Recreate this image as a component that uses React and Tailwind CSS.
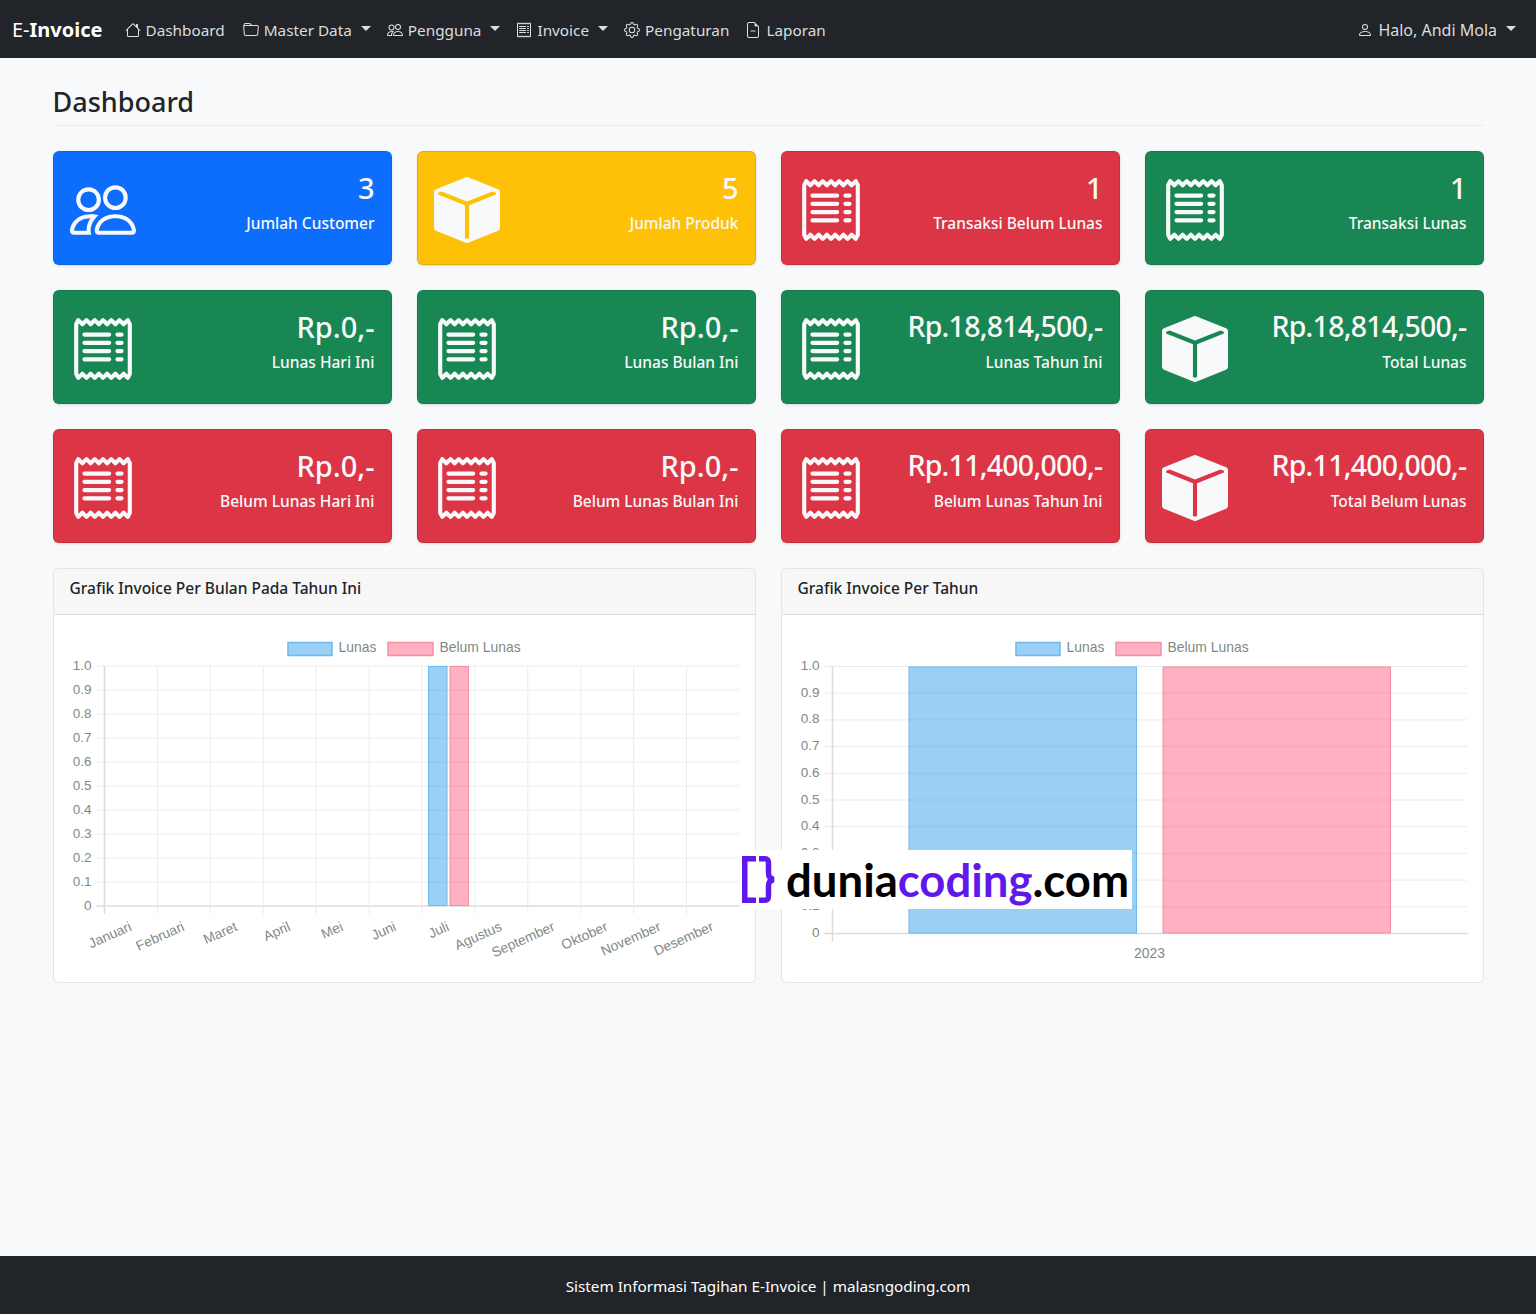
import React from "react";
import { BsHouse, BsFolder, BsPeople, BsReceipt, BsGear, BsFileEarmarkMinus, BsPerson, BsBoxFill } from "react-icons/bs";

const font = { fontFamily: "'Liberation Sans', Arial, sans-serif" };

function NavItem({ icon: Icon, label, caret, size = "text-[15.3px]", extra = "" }) {
  return (
    <a className={`flex items-center gap-[5px] px-2 text-[#ffffffd9] ${size} ${extra}`}>
      <Icon className="text-[16px]" />
      <span>{label}</span>
      {caret && <span className="mb-[3px] ml-[4px] h-0 w-0 border-x-[5px] border-t-[5px] border-x-transparent border-t-[#ffffffd9]" />}
    </a>
  );
}

function StatCard({ color, icon: Icon, value, label }) {
  const valueSize = value.length > 8 ? "text-[28.5px] tracking-[-0.75px]" : "text-[29px]";
  return (
    <div className={`flex h-[114px] items-center justify-between rounded-[6px] border border-black/10 px-4 text-[#f8f9fa] shadow-sm ${color}`}>
      <Icon className="mt-[4px] text-[66px]" />
      <div className="pb-[12px] text-right">
        <div className={`h-[33px] font-medium leading-[33px] ${valueSize}`}>{value}</div>
        <div className="mt-[8px] text-[15.5px] font-medium leading-[22px]">{label}</div>
      </div>
    </div>
  );
}

const G = "bg-[#198754]";
const R = "bg-[#dc3545]";
const cards = [
  ["bg-[#0d6efd]", BsPeople, "3", "Jumlah Customer"],
  ["bg-[#ffc107]", BsBoxFill, "5", "Jumlah Produk"],
  [R, BsReceipt, "1", "Transaksi Belum Lunas"],
  [G, BsReceipt, "1", "Transaksi Lunas"],
  [G, BsReceipt, "Rp.0,-", "Lunas Hari Ini"],
  [G, BsReceipt, "Rp.0,-", "Lunas Bulan Ini"],
  [G, BsReceipt, "Rp.18,814,500,-", "Lunas Tahun Ini"],
  [G, BsBoxFill, "Rp.18,814,500,-", "Total Lunas"],
  [R, BsReceipt, "Rp.0,-", "Belum Lunas Hari Ini"],
  [R, BsReceipt, "Rp.0,-", "Belum Lunas Bulan Ini"],
  [R, BsReceipt, "Rp.11,400,000,-", "Belum Lunas Tahun Ini"],
  [R, BsBoxFill, "Rp.11,400,000,-", "Total Belum Lunas"],
];

const GRID = "#ebebeb";
const AXIS = "#dcdcdc";
const TXT = "#7f8a86";
const BLUE = "rgba(54,162,235,0.5)";
const BLUEB = "#6fb8ee";
const PINK = "rgba(255,99,132,0.5)";
const PINKB = "#f58ea4";

function Legend({ x }) {
  return (
    <g style={font} fontSize="13.9" fill={TXT}>
      <rect x={x} y={642.5} width={44} height={13} fill={BLUE} stroke={BLUEB} strokeWidth="1.5" />
      <text x={x + 50.5} y={652}>Lunas</text>
      <rect x={x + 100} y={642.5} width={45} height={13} fill={PINK} stroke={PINKB} strokeWidth="1.5" />
      <text x={x + 151.5} y={652}>Belum Lunas</text>
    </g>
  );
}

const months = ["Januari", "Februari", "Maret", "April", "Mei", "Juni", "Juli", "Agustus", "September", "Oktober", "November", "Desember"];
const rows = [0, 1, 2, 3, 4, 5, 6, 7, 8, 9, 10];

function MonthChart() {
  const x0 = 104, x1 = 739, y0 = 906, y1 = 666;
  const cw = (x1 - x0) / 12;
  return (
    <svg width="701" height="367" className="block">
      <g transform="translate(-53.5,-615)">
        <Legend x={287.5} />
        {rows.map((i) => {
          const y = y0 - (i * (y0 - y1)) / 10;
          return (
            <g key={i}>
              <line x1={96} x2={x1} y1={y} y2={y} stroke={i === 0 ? AXIS : GRID} strokeWidth={i === 0 ? 1.5 : 1} />
              <text x={91} y={y + 3.5} textAnchor="end" fontSize="13.5" fill={TXT} style={font}>{i === 0 ? "0" : i === 10 ? "1.0" : `0.${i}`}</text>
            </g>
          );
        })}
        {months.map((m, i) => {
          const x = x0 + i * cw;
          return (
            <g key={m}>
              <line x1={x} x2={x} y1={y1} y2={y0 + 8} stroke={i === 0 ? AXIS : GRID} strokeWidth={i === 0 ? 1.5 : 1} />
              <text transform={`translate(${x + cw / 2 + 1.5},${930}) rotate(-24)`} textAnchor="end" fontSize="13.8" fill={TXT} style={font}>{m}</text>
            </g>
          );
        })}
        <rect x={428} y={666.5} width={18.5} height={239} fill={BLUE} stroke={BLUEB} />
        <rect x={449.5} y={666.5} width={18.5} height={239} fill={PINK} stroke={PINKB} />
      </g>
    </svg>
  );
}

function YearChart() {
  const x0 = 832, x1 = 1467, y0 = 933.5, y1 = 666.5;
  return (
    <svg width="701" height="367" className="block">
      <g transform="translate(-781.5,-615)">
        <Legend x={1015.5} />
        {rows.map((i) => {
          const y = y0 - (i * (y0 - y1)) / 10;
          return (
            <g key={i}>
              <line x1={824} x2={x1} y1={y} y2={y} stroke={i === 0 ? AXIS : GRID} strokeWidth={i === 0 ? 1.5 : 1} />
              <text x={819} y={y + 3.5} textAnchor="end" fontSize="13.5" fill={TXT} style={font}>{i === 0 ? "0" : i === 10 ? "1.0" : `0.${i}`}</text>
            </g>
          );
        })}
        <line x1={x0} x2={x0} y1={y1} y2={y0 + 8} stroke={AXIS} strokeWidth="1.5" />
        <rect x={908.5} y={667} width={227.5} height={266} fill={BLUE} stroke={BLUEB} />
        <rect x={1162.5} y={667} width={227.5} height={266} fill={PINK} stroke={PINKB} />
        <text x={1149} y={958} textAnchor="middle" fontSize="13.9" fill={TXT} style={font}>2023</text>
      </g>
    </svg>
  );
}

function ChartCard({ title, children }) {
  return (
    <div className="h-[415px] overflow-hidden rounded-[6px] border border-black/10 bg-white">
      <div className="flex h-[46px] items-center border-b border-black/10 bg-black/[0.03] px-4 pb-[6px] text-[15.5px] font-medium">{title}</div>
      {children}
    </div>
  );
}

export default function App() {
  return (
    <div className="relative flex min-h-[1314px] flex-col bg-[#f8f9fa] text-[16px] text-[#212529]" style={{ fontFamily: "'Noto Sans', 'Open Sans', sans-serif" }}>
      <nav className="flex h-[58px] items-center justify-between bg-[#212529] pl-3 pr-3 pt-[2px]">
        <div className="flex items-center">
          <a className="mr-[14px] text-[20px] text-white">E-<span className="font-bold">Invoice</span></a>
          <NavItem icon={BsHouse} label="Dashboard" extra="mr-[2px]" />
          <NavItem icon={BsFolder} label="Master Data" caret />
          <NavItem icon={BsPeople} label="Pengguna" caret />
          <NavItem icon={BsReceipt} label="Invoice" caret />
          <NavItem icon={BsGear} label="Pengaturan" />
          <NavItem icon={BsFileEarmarkMinus} label="Laporan" />
        </div>
        <NavItem icon={BsPerson} label="Halo, Andi Mola" caret size="text-[16px]" />
      </nav>

      <main className="flex-1 px-[52.5px]">
        <h3 className="mt-[24px] border-b border-[#e9ecef] pb-[4px] text-[27px] font-medium leading-[39px]">Dashboard</h3>
        <div className="mt-[25px] grid grid-cols-4 gap-[25px]">
          {cards.map((c, i) => (
            <StatCard key={i} color={c[0]} icon={c[1]} value={c[2]} label={c[3]} />
          ))}
        </div>
        <div className="mt-[25px] grid grid-cols-2 gap-[25px]">
          <ChartCard title="Grafik Invoice Per Bulan Pada Tahun Ini"><MonthChart /></ChartCard>
          <ChartCard title="Grafik Invoice Per Tahun"><YearChart /></ChartCard>
        </div>
      </main>

      <footer className="flex h-[58px] items-center justify-center bg-[#212529] pt-[2px] text-[15.25px] text-white">
        Sistem Informasi Tagihan E-Invoice | malasngoding.com
      </footer>

      <div className="absolute left-[742px] top-[850px] flex h-[59px] w-[390px] items-center bg-white">
        <svg width="34" height="47" viewBox="0 0 34 47" fill="none" stroke="#5f19ea" strokeWidth="5.5">
          <path d="M14 2.75H2.75V44.25H14" />
          <path d="M17 2.75H23C26.5 2.75 26.5 5 26.5 8V17C26.5 21 28.5 23 32 23.5C28.5 24 26.5 26 26.5 30V39C26.5 42 26.5 44.25 23 44.25H17" />
        </svg>
        <div className="ml-[10px] mt-[2px] text-[45.5px] font-bold text-black" style={{ fontFamily: "Lato, sans-serif" }}>
          <span>dunia</span><span className="text-[#5f19ea]">coding</span><span>.com</span>
        </div>
      </div>
    </div>
  );
}
